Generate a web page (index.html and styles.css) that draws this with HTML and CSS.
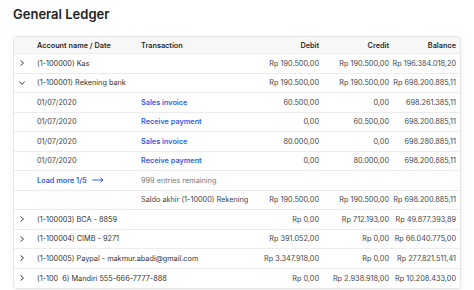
FILE: index.html
```html
<!DOCTYPE html>
<html>
<head>
<meta charset="utf-8">
<link rel="stylesheet" href="styles.css">
</head>
<body>
<div class="page">
  <h1 class="title">General Ledger</h1>
  <div class="card">
    <div class="row head">
      <div></div><div>Account name / Date</div><div>Transaction</div><div class="num">Debit</div><div class="num">Credit</div><div class="num">Balance</div>
    </div>
    <div class="row">
      <div class="chev"><svg width="6" height="6" viewBox="0 0 6 6"><polyline points="1.5,0.5 4.5,3 1.5,5.5" fill="none" stroke="#444" stroke-width="1"/></svg></div>
      <div class="acct">(1-100000) Kas</div><div></div><div class="num">Rp 190.500,00</div><div class="num">Rp 190.500,00</div><div class="num">Rp 196.384.018,20</div>
    </div>
    <div class="row">
      <div class="chev"><svg width="6" height="6" viewBox="0 0 6 6"><polyline points="0.5,1.5 3,4.5 5.5,1.5" fill="none" stroke="#444" stroke-width="1"/></svg></div>
      <div class="acct">(1-100001) Rekening bank</div><div></div><div class="num">Rp 190.500,00</div><div class="num">Rp 190.500,00</div><div class="num">Rp 698.200.885,11</div>
    </div>
    <div class="row sub">
      <div></div><div>01/07/2020</div><div class="link">Sales invoice</div><div class="num">60.500,00</div><div class="num">0,00</div><div class="num">698.261.385,11</div>
    </div>
    <div class="row sub">
      <div></div><div>01/07/2020</div><div class="link">Receive payment</div><div class="num">0,00</div><div class="num">60.500,00</div><div class="num">698.200.885,11</div>
    </div>
    <div class="row sub">
      <div></div><div>01/07/2020</div><div class="link">Sales invoice</div><div class="num">80.000,00</div><div class="num">0,00</div><div class="num">698.280.885,11</div>
    </div>
    <div class="row sub">
      <div></div><div>01/07/2020</div><div class="link">Receive payment</div><div class="num">0,00</div><div class="num">80.000,00</div><div class="num">698.200.885,11</div>
    </div>
    <div class="row sub">
      <div></div><div class="link more">Load more 1/5 <svg width="12" height="6" viewBox="0 0 12 6"><line x1="0.5" y1="3" x2="10.5" y2="3" stroke="#2f5ee6" stroke-width="1"/><polyline points="8.5,1 11,3 8.5,5" fill="none" stroke="#2f5ee6" stroke-width="1"/></svg></div><div class="muted">999 entries remaining</div><div></div><div></div><div></div>
    </div>
    <div class="row">
      <div></div><div></div><div class="saldo">Saldo akhir (1-10000) Rekening</div><div class="num">Rp 190.500,00</div><div class="num">Rp 190.500,00</div><div class="num">Rp 698.200.885,11</div>
    </div>
    <div class="row">
      <div class="chev"><svg width="6" height="6" viewBox="0 0 6 6"><polyline points="1.5,0.5 4.5,3 1.5,5.5" fill="none" stroke="#444" stroke-width="1"/></svg></div>
      <div class="acct">(1-100003) BCA - 8859</div><div></div><div class="num">Rp 0,00</div><div class="num">Rp 712.193,00</div><div class="num">Rp 49.877.393,89</div>
    </div>
    <div class="row">
      <div class="chev"><svg width="6" height="6" viewBox="0 0 6 6"><polyline points="1.5,0.5 4.5,3 1.5,5.5" fill="none" stroke="#444" stroke-width="1"/></svg></div>
      <div class="acct">(1-100004) CIMB - 9271</div><div></div><div class="num">Rp 391.052,00</div><div class="num">Rp 0,00</div><div class="num">Rp 66.040.775,00</div>
    </div>
    <div class="row">
      <div class="chev"><svg width="6" height="6" viewBox="0 0 6 6"><polyline points="1.5,0.5 4.5,3 1.5,5.5" fill="none" stroke="#444" stroke-width="1"/></svg></div>
      <div class="acct">(1-100005) Paypal - makmur.abadi@gmail.com</div><div></div><div class="num">Rp 3.347.918,00</div><div class="num">Rp 0,00</div><div class="num">Rp 277.821.511,41</div>
    </div>
    <div class="row last">
      <div class="chev"><svg width="6" height="6" viewBox="0 0 6 6"><polyline points="1.5,0.5 4.5,3 1.5,5.5" fill="none" stroke="#444" stroke-width="1"/></svg></div>
      <div class="acct">(1-100&nbsp;&nbsp;6) Mandiri 555-666-7777-888</div><div></div><div class="num">Rp 0,00</div><div class="num">Rp 2.938.918,00</div><div class="num">Rp 10.208.433,00</div>
    </div>
  </div>
</div>
</body>
</html>
```

FILE: styles.css
```css
* { box-sizing: border-box; }
html, body { margin: 0; padding: 0; background: #fff; }
body { font-family: Inter, "Noto Sans", sans-serif; color: #333; }
.page { padding: 7px 0 0 13px; width: 474px; height: 290px; overflow: hidden; }
.title { margin: 0 0 15px 0; font-size: 13px; line-height: 14px; font-weight: 600; color: #222; }
.card { width: 448px; border: 1px solid #e6e6e8; border-radius: 3px; background: #fff; box-shadow: 1px 2px 4px rgba(0,0,0,0.06); }
.row { display: grid; grid-template-columns: 23px 104px 108px 70px 70px 67px; padding-right: 6px; height: 19.5px; align-items: center; border-bottom: 1px solid #ececee; font-size: 7.3px; white-space: nowrap; }
.row.last { border-bottom: none; }
.row.head { height: 17px; background: #f7f7f8; font-weight: 600; color: #2a2a2a; }
.num { text-align: right; color: #474747; }
.head .num { color: #2a2a2a; }
.chev { display: flex; justify-content: flex-start; padding-left: 5px; }
.chev svg { display: block; }
.acct { overflow: visible; }
.sub { color: #444; }
.link { color: #2f5ee6; font-weight: 600; }
.more { display: flex; align-items: center; gap: 5px; }
.more svg { display: block; }
.muted { color: #777; }
.saldo { overflow: visible; color: #444; }
```
